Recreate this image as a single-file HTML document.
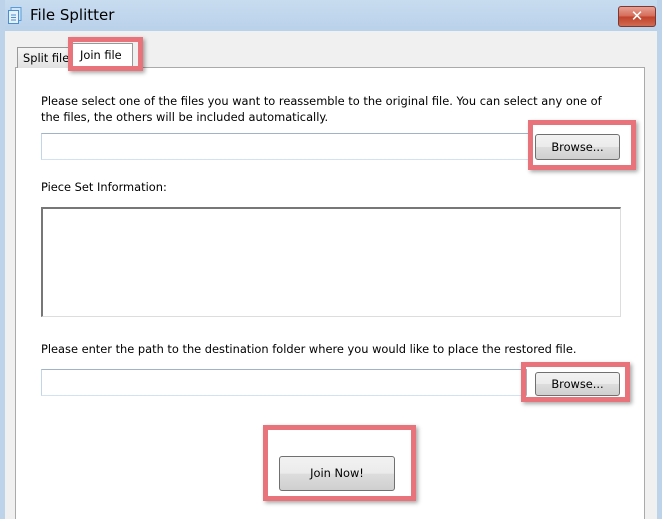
<!DOCTYPE html>
<html><head><style>
*{margin:0;padding:0;box-sizing:border-box}
html,body{width:662px;height:519px;overflow:hidden}
body{position:relative;font-family:"DejaVu Sans","Liberation Sans",sans-serif;font-size:11.4px;color:#000;background:#f0f0f0}
.abs{position:absolute;white-space:nowrap}
.title{left:0;top:0;width:662px;height:31px;background:linear-gradient(#c8dcef,#b9d1ea);}
.frame{left:0;top:0;width:662px;height:519px;border-left:5px solid #bcd3ea;border-right:5px solid #bcd3ea;}
.btn{border:1px solid #707070;border-radius:3px;background:linear-gradient(#f2f2f2 0%,#ebebeb 50%,#dddddd 51%,#cfcfcf 100%);text-align:center;font-size:11.4px;}
.red{border:5px solid #e9737b;box-shadow:2px 2px 4px rgba(0,0,0,.35)}
.inp{border:1px solid #abadb3;border-top-color:#a0b4c8;border-left-color:#c3d6e8;border-bottom-color:#d3e2f0;background:#fff}
</style></head><body>
<div class="abs title"></div>
<div class="abs frame"></div>
<svg class="abs" style="left:7px;top:7px" width="16" height="18"><rect x="4" y="0.5" width="10" height="13" fill="#cfe4f7" stroke="#5a9bd5"/><rect x="1.5" y="3.5" width="10" height="13" fill="#e6f1fb" stroke="#4a8fd0"/><path d="M4 8h5M4 10.5h5M4 13h5" stroke="#4a8fd0"/></svg>
<div class="abs" style="left:30px;top:6px;font-size:15px;">File Splitter</div>
<div class="abs" style="left:618px;top:6px;width:38px;height:21px;border:1px solid #7a3a33;border-radius:3px;background:linear-gradient(#e8a093,#d46a56 50%,#c1412a 51%,#cf6a52);color:#fff;font-weight:bold;text-align:center;font-size:15px;line-height:18px">✕</div>
<div class="abs" style="left:15px;top:67px;width:630px;height:470px;background:#fff;border:1px solid #aaa"></div>
<div class="abs" style="left:17px;top:47px;width:54px;height:21px;background:linear-gradient(#f6f6f6,#e2e2e2);border:1px solid #999;border-bottom:none;padding:3px 0 0 5px;overflow:hidden">Split file</div>
<div class="abs" style="left:70px;top:43px;width:63px;height:26px;background:#fff;border:1px solid #999;border-bottom:none;padding:4px 0 0 9px">Join file</div>
<div class="abs red" style="left:68px;top:37px;width:75px;height:34px"></div>
<div class="abs" style="left:41px;top:93px;width:580px;line-height:16px;white-space:normal">Please select one of the files you want to reassemble to the original file. You can select any one of the files, the others will be included automatically.</div>
<div class="abs inp" style="left:41px;top:133px;width:490px;height:27px"></div>
<div class="abs btn" style="left:535px;top:134px;width:85px;height:26px;line-height:24px">Browse...</div>
<div class="abs red" style="left:528px;top:120px;width:108px;height:50px"></div>
<div class="abs" style="left:41px;top:180px">Piece Set Information:</div>
<div class="abs" style="left:41px;top:207px;width:580px;height:110px;border:1px solid #ddd;border-top:2px solid #777;border-left:2px solid #777;background:#fff"></div>
<div class="abs" style="left:41px;top:342px">Please enter the path to the destination folder where you would like to place the restored file.</div>
<div class="abs inp" style="left:41px;top:369px;width:486px;height:27px"></div>
<div class="abs btn" style="left:535px;top:372px;width:85px;height:24px;line-height:22px">Browse...</div>
<div class="abs red" style="left:521px;top:362px;width:109px;height:40px"></div>
<div class="abs btn" style="left:279px;top:456px;width:116px;height:35px;line-height:33px">Join Now!</div>
<div class="abs red" style="left:263px;top:425px;width:153px;height:76px"></div>
</body></html>
